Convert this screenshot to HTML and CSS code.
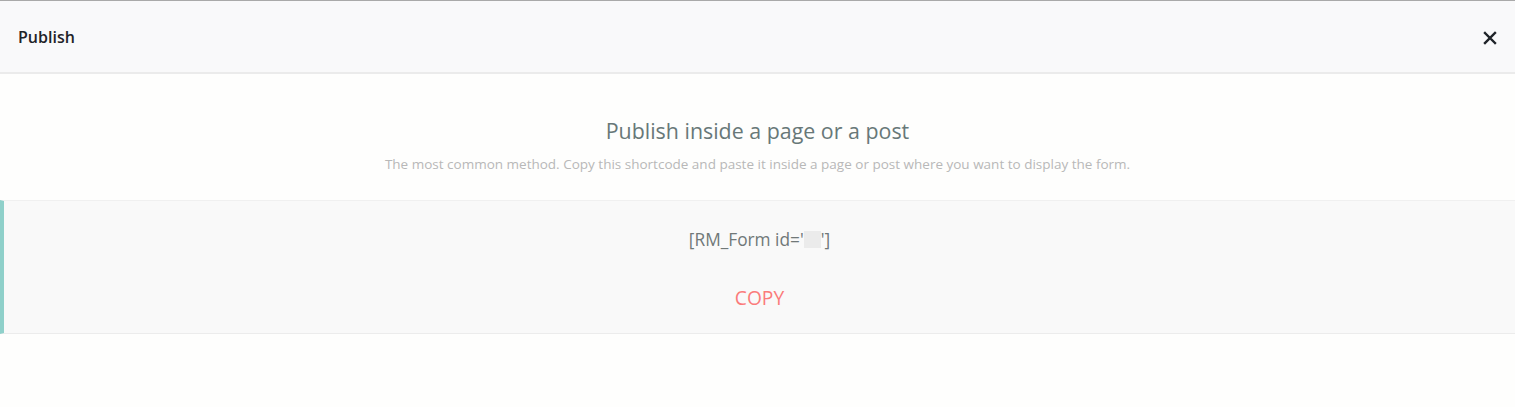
FILE: index.html
```html
<!DOCTYPE html>
<html>
<head>
<meta charset="utf-8">
<link rel="stylesheet" href="styles.css">
</head>
<body>
<div class="modal">
  <header class="modal-head">
    <h1 class="modal-title">Publish</h1>
    <button class="close" aria-label="Close">
      <svg width="14" height="14" viewBox="0 0 14 14"><path d="M2 2L12 12M12 2L2 12" stroke="#1f2328" stroke-width="2.4" stroke-linecap="square"/></svg>
    </button>
  </header>
  <section class="intro">
    <h2 class="intro-title">Publish inside a page or a post</h2>
    <p class="intro-text">The most common method. Copy this shortcode and paste it inside a page or post where you want to display the form.</p>
  </section>
  <section class="code-box">
    <div class="shortcode">[RM_Form id='<span class="redact"></span>']</div>
    <div class="copy">COPY</div>
  </section>
</div>
</body>
</html>
```

FILE: styles.css
```css
html, body {
  margin: 0;
  padding: 0;
  background: #fefefd;
  font-family: "Open Sans", "Noto Sans", sans-serif;
}
.modal {
  border-top: 1px solid #a9a9a9;
}
.modal-head {
  height: 71px;
  background: #f9f9fa;
  border-bottom: 2px solid #ebebeb;
  display: flex;
  align-items: center;
  justify-content: space-between;
  padding: 0 18px;
}
.modal-title {
  margin: 0;
  font-size: 16px;
  font-weight: 600;
  color: #1f2328;
}
.close {
  border: 0;
  background: none;
  padding: 0;
  display: flex;
  margin-top: 2px;
}
.intro {
  text-align: center;
  padding-top: 42px;
  height: 84px;
}
.intro-title {
  margin: 0;
  font-size: 21.4px;
  font-weight: 400;
  color: #687878;
  line-height: 30px;
}
.intro-text {
  margin: 9px 0 0;
  font-size: 13.5px;
  color: #b8b8b8;
  line-height: 18px;
}
.code-box {
  background: #f9f9f9;
  border-top: 1px solid #f0f0f0;
  border-bottom: 1px solid #ececec;
  border-left: 4px solid #8fd0ca;
  height: 132px;
  text-align: center;
}
.shortcode {
  padding-top: 27px;
  font-size: 17.3px;
  color: #707878;
  line-height: 24px;
}
.redact {
  display: inline-block;
  width: 17px;
  height: 17px;
  background: #ebebeb;
  vertical-align: -2px;
}
.copy {
  margin-top: 34px;
  font-size: 19.2px;
  color: #fb7b7b;
  line-height: 24px;
}
```
